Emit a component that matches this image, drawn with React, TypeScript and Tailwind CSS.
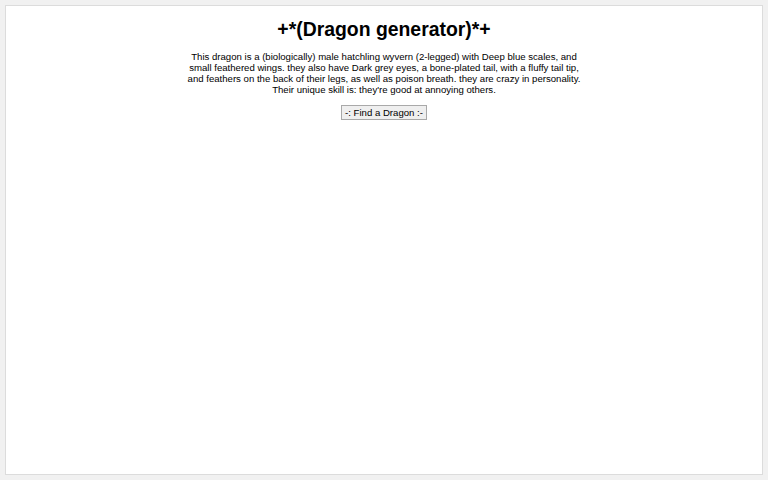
export default function App() {
  return (
    <div className="h-[480px] w-[768px] bg-[#f1f1f1] p-[5px] font-['Liberation_Sans',Arial,sans-serif] text-black">
      <div className="flex h-full flex-col items-center border border-[#dcdcdc] bg-white pt-[11px]">
        <h1 className="text-[19.4px] font-bold leading-[24px]">+*(Dragon generator)*+</h1>
        <p className="mt-[10px] text-center text-[9.6px] leading-[11px]">
          This dragon is a (biologically) male hatchling wyvern (2-legged) with Deep blue scales, and
          <br />
          small feathered wings. they also have Dark grey eyes, a bone-plated tail, with a fluffy tail tip,
          <br />
          and feathers on the back of their legs, as well as poison breath. they are crazy in personality.
          <br />
          Their unique skill is: they're good at annoying others.
        </p>
        <button className="mt-[10px] h-[15px] border border-[#a9a9a9] bg-[#efefef] px-[3px] text-[9.6px] leading-[13px]">
          -: Find a Dragon :-
        </button>
      </div>
    </div>
  );
}
